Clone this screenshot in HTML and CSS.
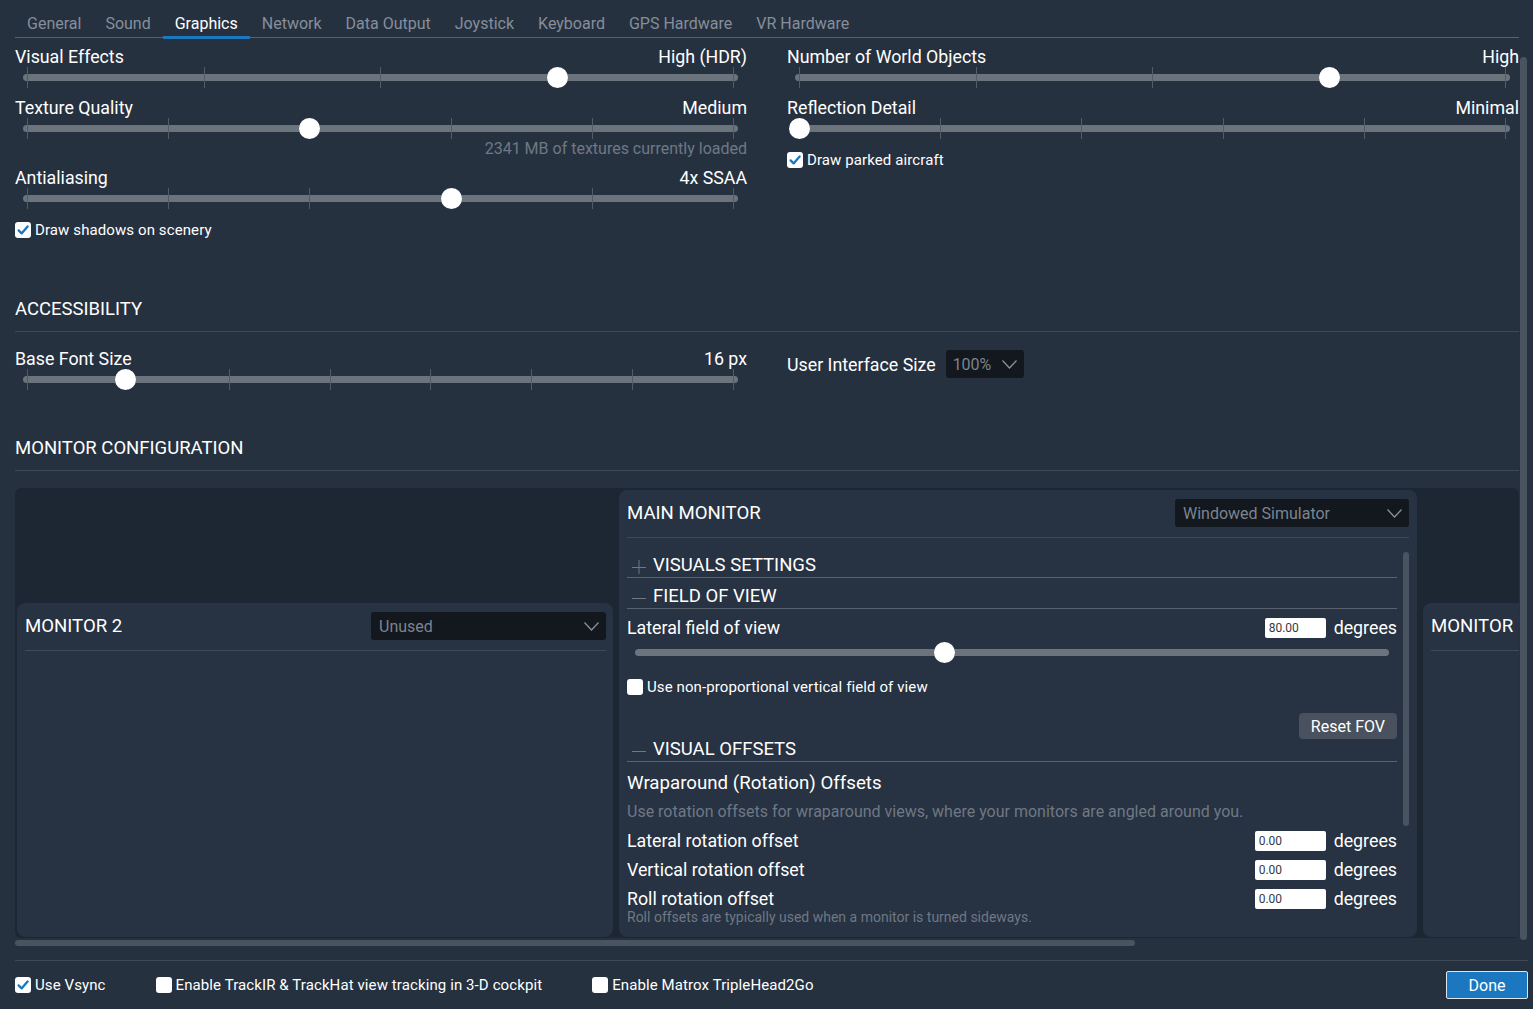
FILE: index.html
```html
<!DOCTYPE html>
<html>
<head>
<meta charset="utf-8">
<link rel="stylesheet" href="styles.css">
</head>
<body>
<nav class="tabs">
  <div class="tab">General</div>
  <div class="tab">Sound</div>
  <div class="tab active">Graphics</div>
  <div class="tab">Network</div>
  <div class="tab">Data Output</div>
  <div class="tab">Joystick</div>
  <div class="tab">Keyboard</div>
  <div class="tab">GPS Hardware</div>
  <div class="tab">VR Hardware</div>
</nav>

<main class="content">
  <div class="cols">
    <div class="col">
      <div class="setting">
        <div class="setting-head"><span>Visual Effects</span><span>High (HDR)</span></div>
        <div class="slider"><div class="track"></div><div class="rail"><i class="tick"></i><i class="tick"></i><i class="tick"></i><i class="tick"></i><i class="tick"></i><span class="thumb" style="left:75%"></span></div></div>
      </div>
      <div class="setting">
        <div class="setting-head"><span>Texture Quality</span><span>Medium</span></div>
        <div class="slider"><div class="track"></div><div class="rail"><i class="tick"></i><i class="tick"></i><i class="tick"></i><i class="tick"></i><i class="tick"></i><i class="tick"></i><span class="thumb" style="left:40%"></span></div></div>
        <div class="note-right">2341 MB of textures currently loaded</div>
      </div>
      <div class="setting">
        <div class="setting-head"><span>Antialiasing</span><span>4x SSAA</span></div>
        <div class="slider"><div class="track"></div><div class="rail"><i class="tick"></i><i class="tick"></i><i class="tick"></i><i class="tick"></i><i class="tick"></i><i class="tick"></i><span class="thumb" style="left:60%"></span></div></div>
      </div>
      <label class="cb cb-first"><span class="box"><svg width="16" height="16" viewBox="0 0 16 16"><path d="M3.6 8.4 L6.6 11.4 L12.6 4.4" fill="none" stroke="#1b78c0" stroke-width="2.3" stroke-linecap="round" stroke-linejoin="round"/></svg></span>Draw shadows on scenery</label>
    </div>
    <div class="col">
      <div class="setting">
        <div class="setting-head"><span>Number of World Objects</span><span>High</span></div>
        <div class="slider"><div class="track"></div><div class="rail"><i class="tick"></i><i class="tick"></i><i class="tick"></i><i class="tick"></i><i class="tick"></i><span class="thumb" style="left:75%"></span></div></div>
      </div>
      <div class="setting">
        <div class="setting-head"><span>Reflection Detail</span><span>Minimal</span></div>
        <div class="slider"><div class="track"></div><div class="rail"><i class="tick"></i><i class="tick"></i><i class="tick"></i><i class="tick"></i><i class="tick"></i><i class="tick"></i><span class="thumb" style="left:0%"></span></div></div>
      </div>
      <label class="cb cb-second"><span class="box"><svg width="16" height="16" viewBox="0 0 16 16"><path d="M3.6 8.4 L6.6 11.4 L12.6 4.4" fill="none" stroke="#1b78c0" stroke-width="2.3" stroke-linecap="round" stroke-linejoin="round"/></svg></span>Draw parked aircraft</label>
    </div>
  </div>

  <h2 class="section sec-access">ACCESSIBILITY</h2>
  <div class="cols access">
    <div class="col">
      <div class="setting">
        <div class="setting-head"><span>Base Font Size</span><span>16 px</span></div>
        <div class="slider"><div class="track"></div><div class="rail"><i class="tick"></i><i class="tick"></i><i class="tick"></i><i class="tick"></i><i class="tick"></i><i class="tick"></i><i class="tick"></i><i class="tick"></i><span class="thumb" style="left:14%"></span></div></div>
      </div>
    </div>
    <div class="col ui-size">
      <span class="ui-label">User Interface Size</span>
      <div class="select sel-small"><span>100%</span><svg width="15" height="9" viewBox="0 0 15 9"><polyline points="0.5,0.5 7.5,8 14.5,0.5" fill="none" stroke="#8b939d" stroke-width="1.2"/></svg></div>
    </div>
  </div>

  <h2 class="section sec-monitor">MONITOR CONFIGURATION</h2>

  <div class="monitors">
    <section class="panel m2">
      <div class="phead"><span class="ptitle">MONITOR 2</span>
        <div class="select sel-m2"><span>Unused</span><svg width="15" height="9" viewBox="0 0 15 9"><polyline points="0.5,0.5 7.5,8 14.5,0.5" fill="none" stroke="#8b939d" stroke-width="1.2"/></svg></div>
      </div>
    </section>

    <section class="panel main">
      <div class="phead"><span class="ptitle">MAIN MONITOR</span>
        <div class="select sel-main"><span>Windowed Simulator</span><svg width="15" height="9" viewBox="0 0 15 9"><polyline points="0.5,0.5 7.5,8 14.5,0.5" fill="none" stroke="#8b939d" stroke-width="1.2"/></svg></div>
      </div>
      <div class="pbody">
        <div class="pcontent">
          <div class="sechead"><svg class="ico" width="14" height="14" viewBox="0 0 14 14"><path d="M0 7.5 H14 M7 0 V14" stroke="#6f7884" stroke-width="1"/></svg>VISUALS SETTINGS</div>
          <div class="sechead"><svg class="ico" width="14" height="14" viewBox="0 0 14 14"><path d="M0 7.5 H14" stroke="#6f7884" stroke-width="1"/></svg>FIELD OF VIEW</div>
          <div class="row row-first"><span>Lateral field of view</span><span class="val"><span class="num n61">80.00</span>degrees</span></div>
          <div class="slider plain"><div class="track"></div><div class="rail"><span class="thumb" style="left:41%"></span></div></div>
          <label class="cb cb-fov"><span class="box"></span>Use non-proportional vertical field of view</label>
          <div class="btnrow"><button class="btn">Reset FOV</button></div>
          <div class="sechead sec-offsets"><svg class="ico" width="14" height="14" viewBox="0 0 14 14"><path d="M0 7.5 H14" stroke="#6f7884" stroke-width="1"/></svg>VISUAL OFFSETS</div>
          <h3 class="subhead">Wraparound (Rotation) Offsets</h3>
          <p class="desc">Use rotation offsets for wraparound views, where your monitors are angled around you.</p>
          <div class="row r9"><span>Lateral rotation offset</span><span class="val"><span class="num n71">0.00</span>degrees</span></div>
          <div class="row r8"><span>Vertical rotation offset</span><span class="val"><span class="num n71">0.00</span>degrees</span></div>
          <div class="row r8"><span>Roll rotation offset</span><span class="val"><span class="num n71">0.00</span>degrees</span></div>
          <p class="small-note">Roll offsets are typically used when a monitor is turned sideways.</p>
        </div>
        <div class="vscroll"></div>
      </div>
    </section>

    <section class="panel m1">
      <div class="phead"><span class="ptitle">MONITOR 1</span></div>
    </section>
  </div>

  <div class="hscroll"></div>

  <footer class="footer">
    <div class="footer-checks">
      <label class="cb"><span class="box"><svg width="16" height="16" viewBox="0 0 16 16"><path d="M3.6 8.4 L6.6 11.4 L12.6 4.4" fill="none" stroke="#1b78c0" stroke-width="2.3" stroke-linecap="round" stroke-linejoin="round"/></svg></span>Use Vsync</label>
      <label class="cb"><span class="box"></span>Enable TrackIR &amp; TrackHat view tracking in 3-D cockpit</label>
      <label class="cb"><span class="box"></span>Enable Matrox TripleHead2Go</label>
    </div>
    <button class="done">Done</button>
  </footer>
</main>

<div class="page-scroll"></div>
</body>
</html>
```

FILE: styles.css
```css
* { box-sizing: border-box; }

body {
  margin: 0;
  width: 1533px;
  height: 1009px;
  overflow: hidden;
  position: relative;
  background: #263140;
  color: #ffffff;
  font-family: Roboto, "Liberation Sans", sans-serif;
}

/* Tabs */
.tabs {
  display: flex;
  height: 38px;
  margin: 0 14px 0 15px;
  border-bottom: 1px solid #58616e;
}
.tab {
  position: relative;
  padding: 14px 12px 0;
  font-size: 16px;
  line-height: 19px;
  color: #858e99;
}
.tab.active { color: #ffffff; }
.tab.active::after {
  content: "";
  position: absolute;
  left: 0;
  right: 0;
  bottom: -2px;
  height: 3px;
  background: #1b78c0;
}

.content { padding: 0 14px 0 15px; }

.cols {
  display: grid;
  grid-template-columns: 732px 732px;
  column-gap: 40px;
  margin-top: 8px;
}

.setting + .setting { margin-top: 9px; }

.setting-head {
  display: flex;
  justify-content: space-between;
  font-size: 17.8px;
  line-height: 21px;
}

.slider {
  position: relative;
  height: 21px;
  margin: 0 9px 0 8px;
}
.track {
  position: absolute;
  left: 0;
  right: 0;
  top: 7px;
  height: 7px;
  border-radius: 4px;
  background: #6b737d;
}
.rail {
  position: absolute;
  top: 0;
  bottom: 0;
  left: 4px;
  right: 4px;
  display: flex;
  justify-content: space-between;
}
.tick {
  display: block;
  width: 1px;
  height: 21px;
  background: #525c69;
  position: relative;
}
.thumb {
  position: absolute;
  top: 0;
  width: 21px;
  height: 21px;
  margin-left: -10.5px;
  border-radius: 50%;
  background: #ffffff;
}

.note-right {
  text-align: right;
  font-size: 16px;
  line-height: 19px;
  color: #6f7884;
}

/* Checkboxes */
.cb {
  display: flex;
  align-items: center;
  gap: 4px;
  font-size: 15px;
  line-height: 18px;
  letter-spacing: 0.1px;
  color: #ffffff;
}
.box {
  flex: none;
  width: 16px;
  height: 16px;
  border-radius: 3px;
  background: #ffffff;
  display: block;
}
.box svg { display: block; }
.cb-first { margin-top: 12px; }
.cb-second { margin-top: 12px; }

/* Section headings */
.section {
  margin: 0;
  font-size: 18.5px;
  font-weight: 400;
  line-height: 24px;
  padding-bottom: 10px;
  border-bottom: 1px solid #3e4857;
}
.sec-access { margin-top: 58px; }
.sec-monitor { margin-top: 46px; }

.access { margin-top: 16px; }
.ui-size {
  display: flex;
  align-items: center;
  gap: 10px;
  align-self: start;
  margin-top: 2px;
}
.ui-label { font-size: 17.8px; }

/* Select */
.select {
  height: 28px;
  border-radius: 3px;
  background: #13171e;
  display: flex;
  align-items: center;
  justify-content: space-between;
  padding: 0 7px 0 8px;
  font-size: 16px;
  color: #7b8490;
}
.select svg { display: block; }
.sel-small { width: 78px; padding-left: 7px; }
.sel-m2 { width: 235px; }
.sel-main { width: 234px; }

/* Monitor canvas */
.monitors {
  margin-top: 17px;
  height: 450px;
  display: flex;
  align-items: flex-end;
  gap: 6px;
  padding: 0 0 1px 2px;
  background: #1d2633;
  border-radius: 6px;
  overflow: hidden;
}
.panel {
  flex: none;
  background: #273242;
  border-radius: 8px;
  padding: 9px 8px 0;
}
.m2 { width: 596px; height: 334px; padding-right: 7px; }
.main { width: 798px; height: 447px; }
.m1 { width: 200px; height: 334px; }

.phead {
  display: flex;
  align-items: center;
  justify-content: space-between;
  min-height: 38px;
  padding-bottom: 10px;
  border-bottom: 1px solid #3f4958;
}
.ptitle { font-size: 18.6px; line-height: 28px; white-space: nowrap; }

.pbody { display: flex; align-items: flex-start; }
.pcontent { width: 770px; padding-top: 9px; }
.vscroll {
  width: 6px;
  height: 274px;
  margin: 14px 0 0 6px;
  border-radius: 3px;
  background: #4a5360;
}

.sechead {
  display: flex;
  align-items: center;
  margin-top: 6px;
  font-size: 18.5px;
  line-height: 24px;
  border-bottom: 1px solid #59626e;
}
.ico { flex: none; margin: 4px 7px 0 5px; display: block; }
.sec-offsets { margin-top: -2px; }

.row {
  display: flex;
  align-items: center;
  justify-content: space-between;
  height: 21px;
  font-size: 17.8px;
}
.row-first { margin-top: 8px; }
.r9 { margin-top: 9px; }
.r8 { margin-top: 8px; }
.val { display: flex; align-items: center; gap: 8px; }
.num {
  height: 20px;
  border-radius: 2px;
  background: #ffffff;
  color: #333a44;
  font-size: 12px;
  line-height: 21px;
  padding-left: 4px;
}
.n61 { width: 61px; }
.n71 { width: 71px; }

.slider.plain { margin: 4px 8px 0; }
.cb-fov { margin-top: 15px; }

.btnrow { display: flex; justify-content: flex-end; margin-top: 17px; }
.btn {
  height: 26px;
  padding: 0 12px;
  border: none;
  border-radius: 4px;
  background: #48515d;
  color: #ffffff;
  font-family: Roboto, "Liberation Sans", sans-serif;
  font-size: 16px;
}

.subhead {
  margin: 9px 0 0;
  font-size: 18.7px;
  font-weight: 400;
  line-height: 24px;
}
.desc {
  margin: 7px 0 0;
  font-size: 16px;
  line-height: 19px;
  color: #6f7884;
}
.small-note {
  margin: 0;
  font-size: 14px;
  line-height: 16px;
  color: #6f7884;
}

.hscroll {
  width: 1120px;
  height: 6px;
  margin-top: 2px;
  border-radius: 3px;
  background: #4a5360;
}

.footer {
  margin-top: 14px;
  margin-right: -9px;
  padding-top: 10px;
  border-top: 1px solid #3e4857;
  display: flex;
  align-items: center;
  justify-content: space-between;
}
.footer-checks { display: flex; gap: 50px; }
.done {
  width: 82px;
  height: 28px;
  border: 1px solid #dce4ec;
  border-radius: 2px;
  background: #1b78c0;
  color: #ffffff;
  font-family: Roboto, "Liberation Sans", sans-serif;
  font-size: 16px;
}

.page-scroll {
  position: absolute;
  left: 1520px;
  top: 57px;
  width: 7px;
  height: 883px;
  border-radius: 4px;
  background: #4a5360;
}
```
